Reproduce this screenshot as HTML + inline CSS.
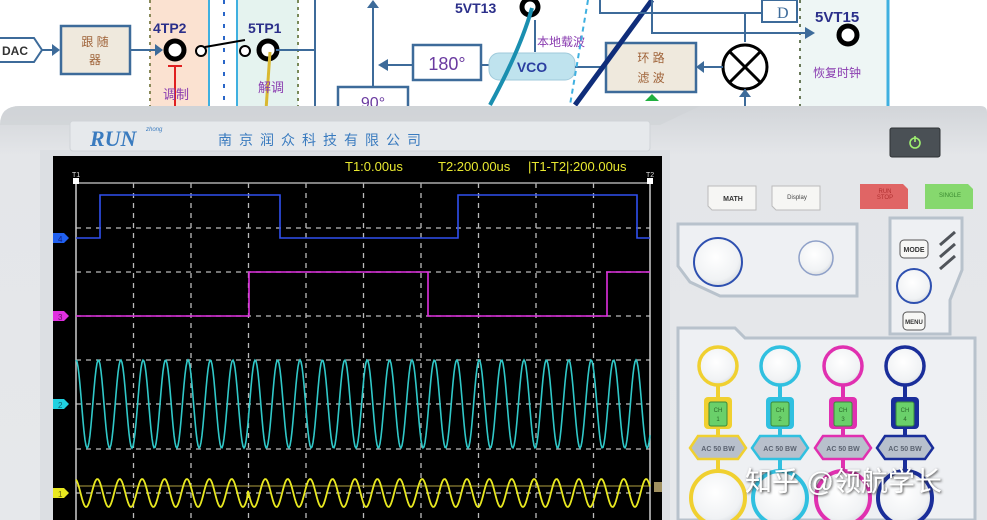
<!DOCTYPE html>
<html><head><meta charset="utf-8">
<style>
html,body{margin:0;padding:0;width:987px;height:520px;overflow:hidden;background:#fff;font-family:"Liberation Sans","Noto Sans CJK SC",sans-serif;}
svg{display:block}
</style></head><body>
<svg id="s" width="987" height="520" viewBox="0 0 987 520" xmlns="http://www.w3.org/2000/svg" font-family="Liberation Sans, Noto Sans CJK SC, sans-serif">
<defs>
<linearGradient id="body" x1="0" y1="0" x2="0" y2="1"><stop offset="0" stop-color="#d2d5d9"/><stop offset="0.12" stop-color="#e4e6e9"/><stop offset="1" stop-color="#e6e8eb"/></linearGradient>
<radialGradient id="knob" cx="0.45" cy="0.4" r="0.6"><stop offset="0" stop-color="#ffffff"/><stop offset="0.8" stop-color="#f0f2f4"/><stop offset="1" stop-color="#dadee2"/></radialGradient>
<filter id="sh" x="-10%" y="-30%" width="120%" height="160%"><feDropShadow dx="1" dy="1" stdDeviation="1.2" flood-color="#333" flood-opacity="0.9"/></filter>
</defs>
<!-- top diagram -->
<rect x="150" y="0" width="58" height="110" fill="#fbe2d1"/>
<line x1="150" y1="0" x2="150" y2="110" stroke="#8a8a5a" stroke-width="2" stroke-dasharray="3,4"/>
<rect x="237" y="0" width="61" height="110" fill="#e5f3ef"/>
<line x1="298" y1="0" x2="298" y2="110" stroke="#7a8a5a" stroke-width="2" stroke-dasharray="3,4"/>
<line x1="209" y1="0" x2="209" y2="110" stroke="#3fb0e0" stroke-width="2"/>
<line x1="237" y1="0" x2="237" y2="110" stroke="#3fb0e0" stroke-width="2"/>
<line x1="224" y1="0" x2="224" y2="110" stroke="#2a66c8" stroke-width="2" stroke-dasharray="4,8"/>
<line x1="315" y1="0" x2="315" y2="110" stroke="#3d6b9a" stroke-width="2"/>
<rect x="800" y="0" width="88" height="110" fill="#eef6f5"/>
<line x1="800" y1="0" x2="800" y2="110" stroke="#6a7a5a" stroke-width="2" stroke-dasharray="3,5"/>
<line x1="888" y1="0" x2="888" y2="110" stroke="#3fb0e0" stroke-width="3"/>
<path d="M0 38 H34 L42 50 L34 62 H0" fill="#fff" stroke="#3d6b9a" stroke-width="2"/>
<text x="2" y="55" font-size="12" font-weight="bold" fill="#333">DAC</text>
<line x1="42" y1="50" x2="58" y2="50" stroke="#3d6b9a" stroke-width="2"/>
<path d="M52 44 L60 50 L52 56Z" fill="#3d6b9a"/>
<rect x="61" y="26" width="69" height="48" fill="#efe9dd" stroke="#3d6b9a" stroke-width="2.5"/>
<text x="95" y="46" font-size="12" fill="#a0643a" text-anchor="middle">跟 随</text>
<text x="95" y="64" font-size="12" fill="#a0643a" text-anchor="middle">器</text>
<line x1="130" y1="50" x2="160" y2="50" stroke="#3d6b9a" stroke-width="2"/>
<path d="M155 44 L163 50 L155 56Z" fill="#3d6b9a"/>
<text x="153" y="33" font-size="14" font-weight="bold" fill="#2b2f8a">4TP2</text>
<text x="248" y="33" font-size="14" font-weight="bold" fill="#2b2f8a">5TP1</text>
<circle cx="175" cy="50" r="9" fill="#fff" stroke="#000" stroke-width="5"/>
<circle cx="201" cy="51" r="5" fill="#fff" stroke="#000" stroke-width="2"/>
<circle cx="245" cy="51" r="5" fill="#fff" stroke="#000" stroke-width="2"/>
<line x1="205" y1="47" x2="245" y2="40" stroke="#000" stroke-width="2"/>
<circle cx="268" cy="50" r="9" fill="#fff" stroke="#000" stroke-width="5"/>
<line x1="276" y1="50" x2="315" y2="50" stroke="#3d6b9a" stroke-width="2"/>
<line x1="168" y1="66" x2="182" y2="66" stroke="#e02020" stroke-width="2"/>
<line x1="175" y1="66" x2="175" y2="110" stroke="#e02020" stroke-width="2"/>
<text x="163" y="99" font-size="13" fill="#8a3cb0">调制</text>
<line x1="270" y1="52" x2="266" y2="110" stroke="#d9b830" stroke-width="3"/>
<text x="258" y="92" font-size="13" fill="#8a3cb0">解调</text>
<line x1="373" y1="105" x2="373" y2="4" stroke="#3d6b9a" stroke-width="2"/>
<path d="M367 8 L373 0 L379 8Z" fill="#3d6b9a"/>
<rect x="338" y="87" width="70" height="25" fill="#fff" stroke="#3d6b9a" stroke-width="2.5"/>
<text x="373" y="108" font-size="16" fill="#6a3aa0" text-anchor="middle">90°</text>
<rect x="413" y="45" width="68" height="35" fill="#fff" stroke="#3d6b9a" stroke-width="2.5"/>
<text x="447" y="70" font-size="18" fill="#6a3aa0" text-anchor="middle">180°</text>
<line x1="413" y1="65" x2="384" y2="65" stroke="#3d6b9a" stroke-width="2"/>
<path d="M388 59 L378 65 L388 71Z" fill="#3d6b9a"/>
<line x1="481" y1="65" x2="492" y2="65" stroke="#3d6b9a" stroke-width="2"/>
<rect x="489" y="53" width="86" height="27" rx="10" fill="#bfe3ee" stroke="#9fcadb"/>
<text x="532" y="72" font-size="14" font-weight="bold" fill="#2b3fa0" text-anchor="middle">VCO</text>
<line x1="575" y1="67" x2="605" y2="67" stroke="#3d6b9a" stroke-width="2"/>
<text x="455" y="13" font-size="14" font-weight="bold" fill="#2b2f8a">5VT13</text>
<circle cx="530" cy="7" r="8" fill="#fff" stroke="#000" stroke-width="5"/>
<line x1="535" y1="52" x2="535" y2="20" stroke="#3d6b9a" stroke-width="2"/>
<text x="537" y="46" font-size="12" fill="#8a3cb0">本地载波</text>
<line x1="588" y1="0" x2="570" y2="105" stroke="#3fb0e0" stroke-width="2" stroke-dasharray="5,4"/>
<path d="M532 8 Q520 50 490 105" fill="none" stroke="#1a8fb0" stroke-width="4"/>
<rect x="606" y="43" width="90" height="49" fill="#efe9dd" stroke="#3d6b9a" stroke-width="2.5"/>
<text x="651" y="62" font-size="12" fill="#a0643a" text-anchor="middle">环 路</text>
<text x="651" y="82" font-size="12" fill="#a0643a" text-anchor="middle">滤 波</text>
<line x1="652" y1="0" x2="575" y2="105" stroke="#0f2d7a" stroke-width="5"/>
<path d="M652 0 V33 H812" fill="none" stroke="#3d6b9a" stroke-width="2"/>
<path d="M600 0 V13 H762" fill="none" stroke="#3d6b9a" stroke-width="2"/>
<path d="M805 27 L815 33 L805 39Z" fill="#3d6b9a"/>
<circle cx="848" cy="35" r="9" fill="#fff" stroke="#000" stroke-width="5"/>
<rect x="762" y="0" width="35" height="22" fill="#fff" stroke="#3d6b9a" stroke-width="2"/>
<text x="777" y="18" font-size="16" font-family="Liberation Serif, serif" fill="#3d6b9a">D</text>
<text x="815" y="22" font-size="15" font-weight="bold" fill="#2b2f8a">5VT15</text>
<text x="813" y="77" font-size="12" fill="#8a3cb0">恢复时钟</text>
<line x1="745" y1="13" x2="745" y2="42" stroke="#3d6b9a" stroke-width="2"/>
<circle cx="745" cy="67" r="22" fill="#fff" stroke="#000" stroke-width="3"/>
<line x1="730" y1="52" x2="760" y2="82" stroke="#000" stroke-width="3"/>
<line x1="760" y1="52" x2="730" y2="82" stroke="#000" stroke-width="3"/>
<line x1="723" y1="67" x2="696" y2="67" stroke="#3d6b9a" stroke-width="2"/>
<path d="M704 61 L696 67 L704 73Z" fill="#3d6b9a"/>
<line x1="745" y1="110" x2="745" y2="89" stroke="#3d6b9a" stroke-width="2"/>
<path d="M739 97 L745 89 L751 97Z" fill="#3d6b9a"/>
<path d="M645 101 L652 94 L659 101Z" fill="#20b040"/>
<!-- scope body -->
<path d="M0 125 Q0 106 20 106 H980 Q987 106 987 112 V520 H0Z" fill="url(#body)"/>
<path d="M0 125 Q0 106 20 106 H700 L660 125 Z" fill="#cfd2d6" opacity="0.6"/>
<rect x="40" y="150" width="630" height="370" fill="#dcdfe3"/>
<rect x="70" y="121" width="580" height="30" rx="3" fill="#e6e9ec" stroke="#d0d4d8"/>
<text x="90" y="146" font-size="22" font-style="italic" font-weight="bold" fill="#3a7bbf" font-family="Liberation Serif, serif">RUN</text>
<text x="146" y="131" font-size="6" font-style="italic" fill="#3a7bbf">zhong</text>
<text x="218" y="145" font-size="14" fill="#3a7bbf" letter-spacing="7">南京润众科技有限公司</text>
<rect x="890" y="128" width="50" height="29" rx="2" fill="#4a5055" stroke="#2e3235"/>
<circle cx="915" cy="143" r="5" fill="none" stroke="#9ff070" stroke-width="1.6"/>
<line x1="915" y1="136" x2="915" y2="142" stroke="#9ff070" stroke-width="1.6"/>
<!-- screen -->
<rect x="53" y="156" width="609" height="364" fill="#000"/>
<text x="345" y="171" font-size="13" fill="#e8e830">T1:0.00us</text>
<text x="438" y="171" font-size="13" fill="#e8e830">T2:200.00us</text>
<text x="528" y="171" font-size="13" fill="#e8e830">|T1-T2|:200.00us</text>
<g id="grid" stroke="#bbb" stroke-width="1.3" stroke-dasharray="5,5"></g>
<line x1="76" y1="183" x2="651" y2="183" stroke="#aaa" stroke-width="1.5"/>
<line x1="76" y1="178" x2="76" y2="520" stroke="#ccc" stroke-width="1.5"/>
<line x1="650" y1="178" x2="650" y2="520" stroke="#ccc" stroke-width="1.5"/>
<rect x="73" y="178" width="6" height="6" fill="#fff"/>
<rect x="647" y="178" width="6" height="6" fill="#fff"/>
<text x="72" y="177" font-size="7" fill="#ddd">T1</text>
<text x="646" y="177" font-size="7" fill="#ddd">T2</text>
<polyline points="76,238 100,238 100,195 280,195 280,238 458,238 458,195 637,195 637,238 650,238" fill="none" stroke="#3050f0" stroke-width="1.6"/>
<polyline points="76,316 249,316 249,272 428,272 428,316 607,316 607,272 650,272" fill="none" stroke="#e030e0" stroke-width="1.6"/>
<line x1="76" y1="486" x2="650" y2="486" stroke="#b0a040" stroke-width="1"/>
<polyline id="c2" fill="none" stroke="#30c8c8" stroke-width="1.6"/>
<polyline id="c1" fill="none" stroke="#e8e820" stroke-width="1.8"/>
<path d="M53 233 H64 L69 238 L64 243 H53Z" fill="#2060f0"/><text x="58" y="242" font-size="8" fill="#102080">4</text>
<path d="M53 311 H64 L69 316 L64 321 H53Z" fill="#e030e0"/><text x="58" y="320" font-size="8" fill="#601060">3</text>
<path d="M53 399 H64 L69 404 L64 409 H53Z" fill="#20d0e0"/><text x="58" y="408" font-size="8" fill="#106070">2</text>
<path d="M53 488 H64 L69 493 L64 498 H53Z" fill="#e8e820"/><text x="58" y="497" font-size="8" fill="#606010">1</text>
<rect x="654" y="482" width="8" height="10" fill="#a09060"/>
<!-- right panel -->
<g font-size="7" text-anchor="middle">
<path d="M708 186 H756 V210 H712 L708 206Z" fill="#f6f6f4" stroke="#bbb"/><text x="733" y="201" font-weight="bold" fill="#333">MATH</text>
<path d="M772 186 H820 V210 H776 L772 206Z" fill="#f6f6f4" stroke="#bbb"/><text x="797" y="199" fill="#444" font-size="6">Display</text>
<path d="M860 184 H903 L908 189 V209 H860Z" fill="#e06565"/><text x="885" y="193" fill="#b03030" font-size="6">RUN</text><text x="885" y="199" fill="#b03030" font-size="6">STOP</text>
<path d="M925 184 H968 L973 189 V209 H925Z" fill="#86d86e"/><text x="950" y="197" fill="#3a8a30" font-size="6">SINGLE</text>
</g>
<path d="M678 224 H857 V296 H720 L690 282 L678 266Z" fill="#eef0f3" stroke="#b8c2cc" stroke-width="3"/>
<circle cx="718" cy="262" r="24" fill="url(#knob)" stroke="#2e50b0" stroke-width="2"/>
<circle cx="816" cy="258" r="17" fill="url(#knob)" stroke="#8ea0c8" stroke-width="1.5"/>
<path d="M890 218 H962 V270 L950 300 V334 H890Z" fill="#eef0f3" stroke="#b8c2cc" stroke-width="3"/>
<g stroke="#50545a" stroke-width="3"><line x1="940" y1="245" x2="955" y2="232"/><line x1="940" y1="257" x2="955" y2="244"/><line x1="940" y1="269" x2="955" y2="256"/></g>
<rect x="900" y="240" width="28" height="18" rx="4" fill="#f7f7f5" stroke="#555"/><text x="914" y="252" font-size="7" font-weight="bold" text-anchor="middle" fill="#333">MODE</text>
<circle cx="914" cy="286" r="17" fill="url(#knob)" stroke="#2e50b0" stroke-width="2"/>
<rect x="903" y="312" width="22" height="18" rx="4" fill="#f7f7f5" stroke="#555"/><text x="914" y="324" font-size="6" font-weight="bold" text-anchor="middle" fill="#333">MENU</text>
<path d="M678 328 H735 L745 338 H975 V520 H678Z" fill="#eef0f3" stroke="#b8c2cc" stroke-width="3"/>
<g id="chs"></g>
<text x="745" y="491" font-size="27" fill="#ffffff" filter="url(#sh)">知乎 @领航学长</text>
</svg>
<script>
var NS="http://www.w3.org/2000/svg",g=document.getElementById('grid');
function L(p,x1,y1,x2,y2,a){var l=document.createElementNS(NS,'line');l.setAttribute('x1',x1);l.setAttribute('y1',y1);l.setAttribute('x2',x2);l.setAttribute('y2',y2);for(var k in a)l.setAttribute(k,a[k]);p.appendChild(l);}
for(var i=1;i<10;i++){var x=76+i*57.5;L(g,x,183,x,520,{});}
[228,272,316,360,404,449,493].forEach(function(y){L(g,76,y,650,y,{});});
var p2=[],p1=[];
for(var x=76;x<=650;x+=1){var t=(x-76)/22.4*2*Math.PI;p2.push(x+','+(404+44*Math.cos(t+Math.PI)).toFixed(1));
var ph=x<248?0:Math.PI;p1.push(x+','+(493-14*Math.cos(t+ph+0.3)).toFixed(1));}
document.getElementById('c2').setAttribute('points',p2.join(' '));
document.getElementById('c1').setAttribute('points',p1.join(' '));
var ch=document.getElementById('chs'),cols=['#f0d030','#30c0e0','#e030b0','#1a2e9a'],xs=[718,780,843,905];
xs.forEach(function(x,i){var c=cols[i];
ch.insertAdjacentHTML('beforeend',
'<line x1="'+x+'" y1="380" x2="'+x+'" y2="470" stroke="'+c+'" stroke-width="4"/>'+
'<circle cx="'+x+'" cy="366" r="19" fill="url(#knob)" stroke="'+c+'" stroke-width="3.5"/>'+
'<rect x="'+(x-14)+'" y="397" width="28" height="32" rx="4" fill="'+c+'"/>'+
'<rect x="'+(x-9)+'" y="402" width="18" height="24" rx="2" fill="#6ad06a" stroke="#3a8a3a"/>'+
'<text x="'+x+'" y="412" font-size="6" text-anchor="middle" fill="#2a6a2a">CH</text><text x="'+x+'" y="421" font-size="6" text-anchor="middle" fill="#2a6a2a">'+(i+1)+'</text>'+
'<path d="M'+(x-28)+' 448 L'+(x-20)+' 436 H'+(x+20)+' L'+(x+28)+' 448 L'+(x+20)+' 459 H'+(x-20)+'Z" fill="#b8c0cc" stroke="'+c+'" stroke-width="2.5"/>'+
'<text x="'+x+'" y="451" font-size="7" font-weight="bold" text-anchor="middle" fill="#5a6270">AC  50  BW</text>'+
'<circle cx="'+x+'" cy="498" r="27" fill="url(#knob)" stroke="'+c+'" stroke-width="4"/>');});
</script>
</body></html>
